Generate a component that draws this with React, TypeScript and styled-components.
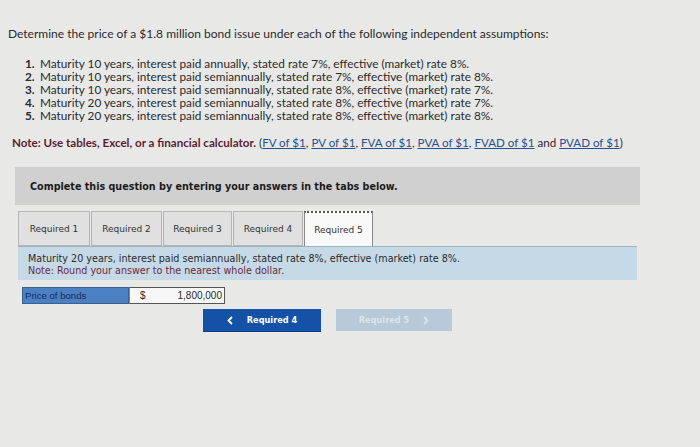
import React from "react";
import styled, { createGlobalStyle } from "styled-components";

const Global = createGlobalStyle`
  html, body { margin: 0; padding: 0; background: #e8e9e7; }
  body { width: 700px; height: 447px; overflow: hidden; }
`;

const Page = styled.div`
  width: 700px;
  height: 447px;
  box-sizing: border-box;
  padding: 26px 0 0 8px;
  background: #e8e9e7;
  font-family: Lato, "Open Sans", sans-serif;
  color: #2a2a2e;
`;

const Title = styled.p`
  margin: 0;
  font-size: 12px;
  line-height: 16px;
`;

const List = styled.ol`
  margin: 15px 0 0 0;
  padding: 0 0 0 17px;
  list-style: none;
  font-size: 11.8px;
  line-height: 13px;
`;

const Item = styled.li`
  display: flex;
  gap: 4px;
  height: 13px;
`;

const Num = styled.span`
  font-weight: 700;
  width: 11px;
`;

const Note = styled.p`
  margin: 13px 0 0 4px;
  font-size: 11.6px;
  line-height: 16px;
  color: #2a2a2e;
`;

const NoteStrong = styled.strong`
  color: #5b1c31;
`;

const Link = styled.span`
  color: #2a4f8f;
  text-decoration: underline;
`;

const Panel = styled.div`
  margin: 16px 0 0 7px;
  width: 625px;
  height: 38px;
  background: #cfd0cf;
  display: flex;
  align-items: center;
  padding-left: 15px;
  box-sizing: border-box;
  font-family: "DejaVu Sans", Verdana, sans-serif;
  font-weight: 700;
  font-size: 9.6px;
  color: #1c1c1c;
`;

const Tabs = styled.div`
  margin: 6px 0 0 10px;
  display: flex;
  gap: 1px;
  align-items: flex-end;
`;

const Tab = styled.div<{ $active?: boolean; $w: number }>`
  width: ${(p) => p.$w}px;
  height: 35px;
  box-sizing: border-box;
  display: flex;
  align-items: center;
  justify-content: center;
  font-family: "DejaVu Sans", Verdana, sans-serif;
  font-size: 9px;
  color: #333;
  background: ${(p) => (p.$active ? "#f8f9f8" : "#dfe0df")};
  border: 1px solid ${(p) => (p.$active ? "#8a8a8a" : "#b5b6b5")};
  border-top: ${(p) => (p.$active ? "2px dotted #555" : "1px solid #b5b6b5")};
  border-bottom: ${(p) => (p.$active ? "none" : "1px solid #b5b6b5")};
`;

const Content = styled.div`
  margin-left: 10px;
  width: 619px;
  height: 34px;
  box-sizing: border-box;
  background: #c6d9e7;
  border-top: 1px solid #9fb2c0;
  padding: 6px 0 0 10px;
  font-family: "DejaVu Sans", Verdana, sans-serif;
  font-size: 9.6px;
  line-height: 12px;
  color: #2b2b2b;
`;

const Maroon = styled.div`
  color: #6b2a3c;
`;

const Row = styled.div`
  margin: 7px 0 0 14px;
  display: flex;
  height: 17px;
`;

const Label = styled.div`
  width: 107px;
  box-sizing: border-box;
  background: #4b80c3;
  border: 1px solid #3c5f8e;
  font-family: "Liberation Sans", Arial, sans-serif;
  font-size: 9.6px;
  color: #1a2a55;
  display: flex;
  align-items: center;
  padding-left: 2px;
`;

const Input = styled.div`
  width: 96px;
  box-sizing: border-box;
  background: #f7f7f7;
  border: 1px solid #555;
  border-left: 1px solid #888;
  font-family: "Liberation Sans", Arial, sans-serif;
  font-size: 10px;
  color: #2a2a2a;
  display: flex;
  align-items: center;
  justify-content: space-between;
  padding: 0 2px 0 10px;
`;

const Buttons = styled.div`
  margin: 5px 0 0 195px;
  display: flex;
  gap: 15px;
  align-items: flex-start;
`;

const Btn = styled.div<{ $disabled?: boolean }>`
  width: ${(p) => (p.$disabled ? 116 : 118)}px;
  height: ${(p) => (p.$disabled ? 22 : 23)}px;
  box-sizing: border-box;
  background: ${(p) => (p.$disabled ? "#b9c9d9" : "#1452a7")};
  color: ${(p) => (p.$disabled ? "#dbe4ee" : "#ffffff")};
  font-family: "DejaVu Sans", Verdana, sans-serif;
  font-weight: 700;
  font-size: 8.2px;
  display: flex;
  align-items: center;
  justify-content: center;
  gap: 14px;
  border-bottom: ${(p) => (p.$disabled ? "none" : "1px solid #0c3a7c")};
`;

const Chevron = ({ left }: { left?: boolean }) => (
  <svg width="6" height="9" viewBox="0 0 6 9">
    <path
      d={left ? "M5 1 L1.5 4.5 L5 8" : "M1 1 L4.5 4.5 L1 8"}
      fill="none"
      stroke="currentColor"
      strokeWidth="1.8"
    />
  </svg>
);

const items = [
  "Maturity 10 years, interest paid annually, stated rate 7%, effective (market) rate 8%.",
  "Maturity 10 years, interest paid semiannually, stated rate 7%, effective (market) rate 8%.",
  "Maturity 10 years, interest paid semiannually, stated rate 8%, effective (market) rate 7%.",
  "Maturity 20 years, interest paid semiannually, stated rate 8%, effective (market) rate 7%.",
  "Maturity 20 years, interest paid semiannually, stated rate 8%, effective (market) rate 8%.",
];

const tabs = [
  { t: "Required 1", w: 72 },
  { t: "Required 2", w: 71 },
  { t: "Required 3", w: 69 },
  { t: "Required 4", w: 70 },
  { t: "Required 5", w: 69, active: true },
];

export default function App() {
  return (
    <>
      <Global />
      <Page>
        <Title>
          Determine the price of a $1.8 million bond issue under each of the following independent assumptions:
        </Title>
        <List>
          {items.map((t, i) => (
            <Item key={i}>
              <Num>{i + 1}.</Num>
              <span>{t}</span>
            </Item>
          ))}
        </List>
        <Note>
          <NoteStrong>Note: Use tables, Excel, or a financial calculator.</NoteStrong> (
          <Link>FV of $1</Link>, <Link>PV of $1</Link>, <Link>FVA of $1</Link>, <Link>PVA of $1</Link>,{" "}
          <Link>FVAD of $1</Link> and <Link>PVAD of $1</Link>)
        </Note>
        <Panel>Complete this question by entering your answers in the tabs below.</Panel>
        <Tabs>
          {tabs.map((t) => (
            <Tab key={t.t} $w={t.w} $active={t.active}>
              {t.t}
            </Tab>
          ))}
        </Tabs>
        <Content>
          <div>Maturity 20 years, interest paid semiannually, stated rate 8%, effective (market) rate 8%.</div>
          <Maroon>Note: Round your answer to the nearest whole dollar.</Maroon>
        </Content>
        <Row>
          <Label>Price of bonds</Label>
          <Input>
            <span>$</span>
            <span>1,800,000</span>
          </Input>
        </Row>
        <Buttons>
          <Btn>
            <Chevron left />
            <span>Required 4</span>
          </Btn>
          <Btn $disabled>
            <span>Required 5</span>
            <Chevron />
          </Btn>
        </Buttons>
      </Page>
    </>
  );
}
